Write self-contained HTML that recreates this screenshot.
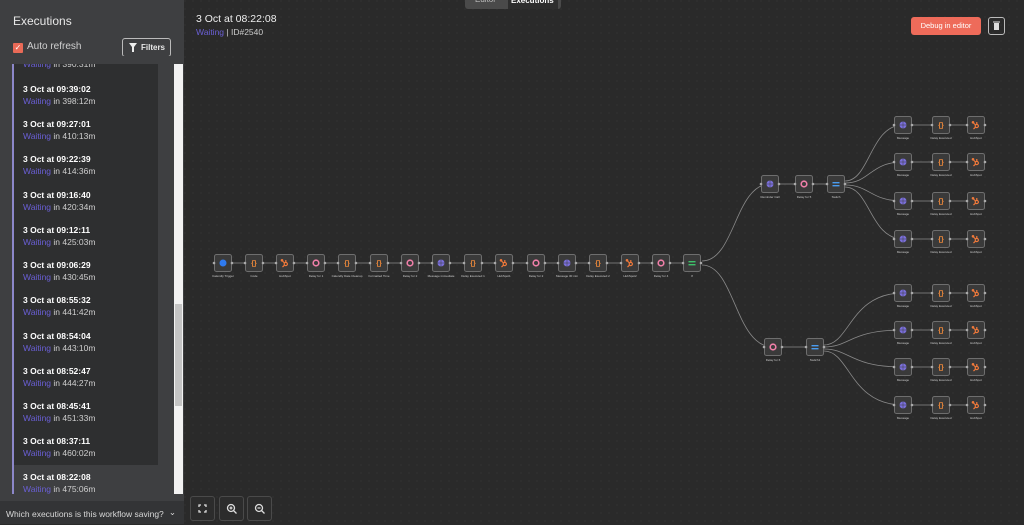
<!DOCTYPE html>
<html><head><meta charset="utf-8"><style>
*{margin:0;padding:0;box-sizing:border-box}
body{width:1024px;height:524px;overflow:hidden;background:#2a2a2a;font-family:"Liberation Sans",sans-serif;position:relative}
.side{position:absolute;left:0;top:0;width:184px;height:524px;background:#3e3f41}
.h{position:absolute;left:13px;top:14px;color:#e8e8e8;font-size:12px}
.cb{position:absolute;left:13px;top:43px;width:10px;height:10px;background:#e96a57;border-radius:1px;color:#fff;font-size:8px;line-height:10px;text-align:center}
.ar{position:absolute;left:27px;top:41px;color:#d0d0d0;font-size:10px}
.fb{position:absolute;left:122px;top:38px;width:49px;height:19px;border:1px solid #bbb;border-radius:3px;color:#e8e8e8;font-size:8px;font-weight:bold;line-height:17px;padding-left:18px}
.list{position:absolute;left:12px;top:64px;width:146px;height:437px;background:#2e2f30;overflow:hidden}
.bar{position:absolute;left:12px;top:64px;width:2px;height:430px;background:#8c87c9}
.it{position:absolute;left:23px;font-size:8.5px;color:#fff;font-weight:bold;line-height:12px}
.it span{display:block;font-weight:normal;color:#cfcfcf}
.it i{font-style:normal;color:#6a5fd6}
.sb{position:absolute;left:174px;top:64px;width:9px;height:430px;background:#f2f2f2}
.th{position:absolute;left:175px;top:304px;width:7px;height:102px;background:#c4c4c4}
.bot{position:absolute;left:0;top:501px;width:184px;height:23px;background:#333436;color:#d8d8d8;font-size:8.5px;padding:8px 6px}
.t1{position:absolute;left:196px;top:13px;color:#eee;font-size:10.5px}
.t2{position:absolute;left:196px;top:27px;color:#ccc;font-size:8.5px}
.tab{position:absolute;left:465px;top:0;width:96px;height:9px;background:#4a4a4a;border-radius:0 0 3px 3px;font-size:8px;color:#bbb;overflow:hidden}
.tab span{position:absolute;top:-5px}
.dbg{position:absolute;left:911px;top:17px;width:70px;height:18px;background:#ee6b5a;border-radius:3px;color:#fff;font-size:7.5px;text-align:center;line-height:18px}
.tr{position:absolute;left:988px;top:17px;width:17px;height:18px;border:1px solid #bbb;border-radius:3px}
.zb{position:absolute;top:496px;width:25px;height:25px;border:1px solid #4a4a4a;border-radius:3px;background:#2c2c2c}
</style></head><body>
<svg width="1024" height="524" style="position:absolute;left:0;top:0">
<defs>
<pattern id="p" width="8" height="8" patternUnits="userSpaceOnUse"><rect width="8" height="8" fill="#2a2a2a"/><circle cx="1" cy="1" r=".6" fill="#353535"/></pattern>
<g id="n"><rect x="-8.5" y="-8.5" width="17" height="17" rx="2" fill="#3a3a3a" stroke="#6e6e6e"/><circle cx="-9" cy="0" r="1.3" fill="#aaa"/><circle cx="9" cy="0" r="1.3" fill="#aaa"/></g>
<g id="hs" fill="none" stroke="#f0793a" stroke-width="1.2"><circle cx="0.8" cy="1" r="1.6"/><path d="M0.8 -0.6V-3M-0.5 0L-3 -2.5M-0.5 2.2L-2.5 4"/><circle cx="-3" cy="-2.7" r=".7" fill="#f0793a"/></g>
<g id="cd"><text y="2.4" font-size="7" fill="#f08a3a" font-weight="bold">{}</text></g>
<g id="wt"><circle r="2.8" fill="none" stroke="#ef7fa8" stroke-width="1.6"/></g>
<g id="gl"><circle r="3.5" fill="#7b6fdc"/><path d="M-3.5 0H3.5M0 -3.5V3.5" stroke="#3a3a3a" stroke-width=".5"/></g>
</defs>
<rect x="184" y="0" width="840" height="524" fill="url(#p)"/>
<g fill="none" stroke="#8a8a8a" stroke-width="0.8">
<path d="M223 263H692"/>
<path d="M702 261C735 261 735 184 770 184H836"/><path d="M702 265C735 265 735 347 773 347H815"/>
<path d="M845 181C870 181 870 125 903 125H976"/><path d="M845 183C870 183 870 162 903 162H976"/>
<path d="M845 185C870 185 870 201 903 201H976"/><path d="M845 187C870 187 870 239 903 239H976"/>
<path d="M824 345C850 345 850 293 903 293H976"/><path d="M824 347C850 347 850 330 903 330H976"/>
<path d="M824 349C850 349 850 367 903 367H976"/><path d="M824 351C850 351 850 405 903 405H976"/>
</g>
<g font-size="3" fill="#ccc" text-anchor="middle">
<g transform="translate(223,263)"><use href="#n"/><circle r="3.5" fill="#2f7bf0"/><text y="14">Calendly Trigger</text></g>
<g transform="translate(254,263)"><use href="#n"/><use href="#cd"/><text y="14">Code</text></g>
<g transform="translate(285,263)"><use href="#n"/><use href="#hs"/><text y="14">HubSpot</text></g>
<g transform="translate(316,263)"><use href="#n"/><use href="#wt"/><text y="14">Delay for 1</text></g>
<g transform="translate(347,263)"><use href="#n"/><use href="#cd"/><text y="14">Calendly Date Cleanup</text></g>
<g transform="translate(379,263)"><use href="#n"/><use href="#cd"/><text y="14">Formatted Time</text></g>
<g transform="translate(410,263)"><use href="#n"/><use href="#wt"/><text y="14">Delay for 2</text></g>
<g transform="translate(441,263)"><use href="#n"/><use href="#gl"/><text y="14">Message immediate</text></g>
<g transform="translate(473,263)"><use href="#n"/><use href="#cd"/><text y="14">Delay Executed 1</text></g>
<g transform="translate(504,263)"><use href="#n"/><use href="#hs"/><text y="14">HubSpot1</text></g>
<g transform="translate(536,263)"><use href="#n"/><use href="#wt"/><text y="14">Delay for 2</text></g>
<g transform="translate(567,263)"><use href="#n"/><use href="#gl"/><text y="14">Message 30 min</text></g>
<g transform="translate(598,263)"><use href="#n"/><use href="#cd"/><text y="14">Delay Executed 2</text></g>
<g transform="translate(630,263)"><use href="#n"/><use href="#hs"/><text y="14">HubSpot2</text></g>
<g transform="translate(661,263)"><use href="#n"/><use href="#wt"/><text y="14">Delay for 4</text></g>
<g transform="translate(692,263)"><use href="#n"/><rect x="-3.5" y="-2" width="7" height="1.4" fill="#3ec26a"/><rect x="-3.5" y="1" width="7" height="1.4" fill="#3ec26a"/><text y="14">If</text></g>
<g transform="translate(770,184)"><use href="#n"/><use href="#gl"/><text y="14">Reminder Call</text></g>
<g transform="translate(804,184)"><use href="#n"/><use href="#wt"/><text y="14">Delay for 5</text></g>
<g transform="translate(836,184)"><use href="#n"/><rect x="-3.5" y="-2" width="7" height="1.4" fill="#4a9cf0"/><rect x="-3.5" y="1" width="7" height="1.4" fill="#4a9cf0"/><text y="14">Switch</text></g>
<g transform="translate(773,347)"><use href="#n"/><use href="#wt"/><text y="14">Delay for 6</text></g>
<g transform="translate(815,347)"><use href="#n"/><rect x="-3.5" y="-2" width="7" height="1.4" fill="#4a9cf0"/><rect x="-3.5" y="1" width="7" height="1.4" fill="#4a9cf0"/><text y="14">Switch1</text></g>
</g>
<g font-size="3" fill="#ccc" text-anchor="middle">
<g transform="translate(903,125)"><use href="#n"/><use href="#gl"/><text y="14">Message</text></g><g transform="translate(941,125)"><use href="#n"/><use href="#cd"/><text y="14">Delay Executed</text></g><g transform="translate(976,125)"><use href="#n"/><use href="#hs"/><text y="14">HubSpot</text></g>
<g transform="translate(903,162)"><use href="#n"/><use href="#gl"/><text y="14">Message</text></g><g transform="translate(941,162)"><use href="#n"/><use href="#cd"/><text y="14">Delay Executed</text></g><g transform="translate(976,162)"><use href="#n"/><use href="#hs"/><text y="14">HubSpot</text></g>
<g transform="translate(903,201)"><use href="#n"/><use href="#gl"/><text y="14">Message</text></g><g transform="translate(941,201)"><use href="#n"/><use href="#cd"/><text y="14">Delay Executed</text></g><g transform="translate(976,201)"><use href="#n"/><use href="#hs"/><text y="14">HubSpot</text></g>
<g transform="translate(903,239)"><use href="#n"/><use href="#gl"/><text y="14">Message</text></g><g transform="translate(941,239)"><use href="#n"/><use href="#cd"/><text y="14">Delay Executed</text></g><g transform="translate(976,239)"><use href="#n"/><use href="#hs"/><text y="14">HubSpot</text></g>
<g transform="translate(903,293)"><use href="#n"/><use href="#gl"/><text y="14">Message</text></g><g transform="translate(941,293)"><use href="#n"/><use href="#cd"/><text y="14">Delay Executed</text></g><g transform="translate(976,293)"><use href="#n"/><use href="#hs"/><text y="14">HubSpot</text></g>
<g transform="translate(903,330)"><use href="#n"/><use href="#gl"/><text y="14">Message</text></g><g transform="translate(941,330)"><use href="#n"/><use href="#cd"/><text y="14">Delay Executed</text></g><g transform="translate(976,330)"><use href="#n"/><use href="#hs"/><text y="14">HubSpot</text></g>
<g transform="translate(903,367)"><use href="#n"/><use href="#gl"/><text y="14">Message</text></g><g transform="translate(941,367)"><use href="#n"/><use href="#cd"/><text y="14">Delay Executed</text></g><g transform="translate(976,367)"><use href="#n"/><use href="#hs"/><text y="14">HubSpot</text></g>
<g transform="translate(903,405)"><use href="#n"/><use href="#gl"/><text y="14">Message</text></g><g transform="translate(941,405)"><use href="#n"/><use href="#cd"/><text y="14">Delay Executed</text></g><g transform="translate(976,405)"><use href="#n"/><use href="#hs"/><text y="14">HubSpot</text></g>
</g>
</svg>
<div class="tab"><span style="left:10px">Editor</span><span style="left:43px;width:50px;height:14px;background:#2e2e2e;color:#fff;padding-left:3px;font-weight:bold;top:-5px;line-height:12px">Executions</span></div>
<div class="t1">3 Oct at 08:22:08</div>
<div class="t2"><span style="color:#6a5fd6">Waiting</span> | ID#2540</div>
<div class="dbg">Debug in editor</div>
<div class="tr"><svg width="15" height="16"><rect x="5" y="5" width="5" height="7" fill="#ddd"/><rect x="4" y="3.5" width="7" height="1" fill="#ddd"/></svg></div>
<div class="zb" style="left:190px"><svg width="23" height="23" fill="none" stroke="#ddd" stroke-width="1.3"><path d="M8 10V8h2M13 8h2v2M15 13v2h-2M10 15H8v-2"/></svg></div>
<div class="zb" style="left:219px"><svg width="23" height="23" fill="none" stroke="#ddd" stroke-width="1.3"><circle cx="11" cy="11" r="3.5"/><path d="M13.5 13.5l3 3M9.5 11h3M11 9.5v3"/></svg></div>
<div class="zb" style="left:247px"><svg width="23" height="23" fill="none" stroke="#ddd" stroke-width="1.3"><circle cx="11" cy="11" r="3.5"/><path d="M13.5 13.5l3 3M9.5 11h3"/></svg></div>
<div class="side">
<div class="h">Executions</div>
<div class="cb">✓</div><div class="ar">Auto refresh</div>
<div class="fb"><svg style="position:absolute;left:6px;top:4px" width="8" height="9"><path d="M0 0H8L5 4V9H3V4Z" fill="#eee"/></svg>Filters</div>
<div class="list">
<div style="position:absolute;left:0;top:401px;width:146px;height:36px;background:#3e3f41"></div>
</div>
<div class="bar"></div>
<div class="it" style="top:58px"><span><i>Waiting</i> in 390:31m</span></div>
<div class="it" style="top:83px">3 Oct at 09:39:02<span><i>Waiting</i> in 398:12m</span></div>
<div class="it" style="top:118px">3 Oct at 09:27:01<span><i>Waiting</i> in 410:13m</span></div>
<div class="it" style="top:153px">3 Oct at 09:22:39<span><i>Waiting</i> in 414:36m</span></div>
<div class="it" style="top:189px">3 Oct at 09:16:40<span><i>Waiting</i> in 420:34m</span></div>
<div class="it" style="top:224px">3 Oct at 09:12:11<span><i>Waiting</i> in 425:03m</span></div>
<div class="it" style="top:259px">3 Oct at 09:06:29<span><i>Waiting</i> in 430:45m</span></div>
<div class="it" style="top:294px">3 Oct at 08:55:32<span><i>Waiting</i> in 441:42m</span></div>
<div class="it" style="top:330px">3 Oct at 08:54:04<span><i>Waiting</i> in 443:10m</span></div>
<div class="it" style="top:365px">3 Oct at 08:52:47<span><i>Waiting</i> in 444:27m</span></div>
<div class="it" style="top:400px">3 Oct at 08:45:41<span><i>Waiting</i> in 451:33m</span></div>
<div class="it" style="top:435px">3 Oct at 08:37:11<span><i>Waiting</i> in 460:02m</span></div>
<div class="it" style="top:471px">3 Oct at 08:22:08<span><i>Waiting</i> in 475:06m</span></div>
<div style="position:absolute;left:0;top:56px;width:184px;height:8px;background:#3e3f41"></div>
<div class="sb"></div><div class="th"></div>
<div class="bot">Which executions is this workflow saving?<span style="position:absolute;right:8px;top:6px">⌄</span></div>
</div>
</body></html>
